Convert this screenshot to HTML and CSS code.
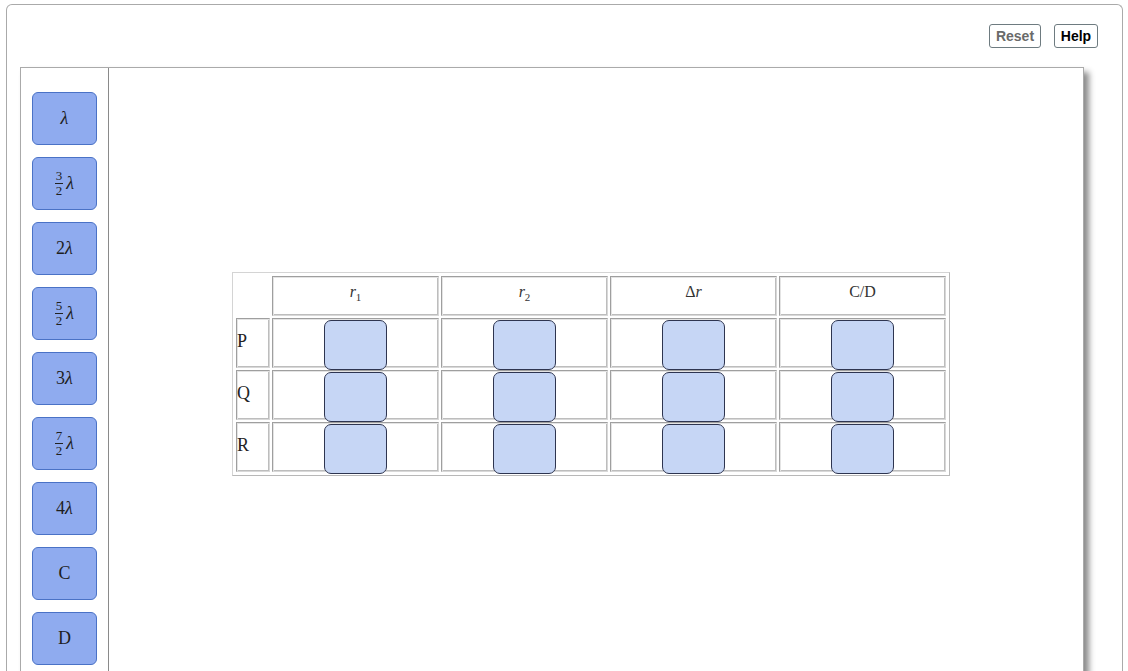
FILE: index.html
```html
<!DOCTYPE html>
<html>
<head>
<meta charset="utf-8">
<link rel="stylesheet" href="styles.css">
</head>
<body>
<div class="frame">
  <div class="toolbar">
    <button class="btn btn-reset">Reset</button>
    <button class="btn btn-help">Help</button>
  </div>
  <div class="workspace">
    <div class="palette">
      <div class="tile"><span class="mi">λ</span></div>
      <div class="tile"><span class="frac"><span class="num">3</span><span class="den">2</span></span><span class="mi">λ</span></div>
      <div class="tile"><span class="mn">2</span><span class="mi">λ</span></div>
      <div class="tile"><span class="frac"><span class="num">5</span><span class="den">2</span></span><span class="mi">λ</span></div>
      <div class="tile"><span class="mn">3</span><span class="mi">λ</span></div>
      <div class="tile"><span class="frac"><span class="num">7</span><span class="den">2</span></span><span class="mi">λ</span></div>
      <div class="tile"><span class="mn">4</span><span class="mi">λ</span></div>
      <div class="tile"><span class="mn">C</span></div>
      <div class="tile"><span class="mn">D</span></div>
    </div>
    <div class="canvas">
      <table class="grid">
        <tr class="head">
          <td class="corner"></td>
          <td class="hcell"><span class="mi">r</span><sub>1</sub></td>
          <td class="hcell"><span class="mi">r</span><sub>2</sub></td>
          <td class="hcell">Δ<span class="mi">r</span></td>
          <td class="hcell">C/D</td>
        </tr>
        <tr class="row">
          <td class="label">P</td>
          <td class="cell"><div class="target"></div></td>
          <td class="cell"><div class="target"></div></td>
          <td class="cell"><div class="target"></div></td>
          <td class="cell"><div class="target"></div></td>
        </tr>
        <tr class="row">
          <td class="label">Q</td>
          <td class="cell"><div class="target"></div></td>
          <td class="cell"><div class="target"></div></td>
          <td class="cell"><div class="target"></div></td>
          <td class="cell"><div class="target"></div></td>
        </tr>
        <tr class="row">
          <td class="label">R</td>
          <td class="cell"><div class="target"></div></td>
          <td class="cell"><div class="target"></div></td>
          <td class="cell"><div class="target"></div></td>
          <td class="cell"><div class="target"></div></td>
        </tr>
      </table>
    </div>
  </div>
</div>
</body>
</html>
```
FILE: styles.css
```css
html, body {
  margin: 0;
  padding: 0;
  background: #fff;
  height: 100%;
  overflow: hidden;
}
body {
  font-family: "Liberation Sans", Arial, sans-serif;
}
.frame {
  margin: 4px 5px 0 6px;
  border: 1px solid #aaa;
  border-bottom: none;
  border-radius: 6px 6px 0 0;
  height: calc(100% - 4px);
  padding: 0 24px 0 13px;
  box-sizing: border-box;
  display: flex;
  flex-direction: column;
  overflow: hidden;
}
.toolbar {
  display: flex;
  justify-content: flex-end;
  gap: 13px;
  padding-top: 19px;
  height: 62px;
  flex: none;
  box-sizing: border-box;
}
.btn {
  font-family: "Liberation Sans", Arial, sans-serif;
  font-weight: bold;
  font-size: 14px;
  height: 24px;
  padding: 0 5px;
  background: #fff;
  border: 1px solid #6e7b80;
  border-radius: 3px;
  line-height: 20px;
}
.btn-reset { color: #6a6a6a; width: 52px; }
.btn-help { color: #000; width: 44px; }
.workspace {
  display: flex;
  flex: 1;
  margin-right: 14px;
  margin-bottom: -20px;
  border: 1px solid #aaa;
  border-bottom: none;
  box-shadow: 5px 5px 6px #8c8c8c;
  background: #fff;
}
.palette {
  width: 87px;
  border-right: 1px solid #8a8a8a;
  display: flex;
  flex-direction: column;
  align-items: center;
  gap: 12px;
  padding-top: 24px;
  box-sizing: content-box;
}
.tile {
  width: 65px;
  height: 53px;
  flex: none;
  box-sizing: border-box;
  background: #8fabef;
  border: 1px solid #4a72c6;
  border-radius: 6px;
  display: flex;
  align-items: center;
  justify-content: center;
  font-family: "Liberation Serif", serif;
  font-size: 18px;
  color: #1e1e1e;
}
.mi {
  font-family: "Liberation Serif", serif;
  font-style: italic;
}
.mn {
  font-family: "Liberation Serif", serif;
}
.frac {
  display: inline-flex;
  flex-direction: column;
  align-items: center;
  font-size: 13px;
  line-height: 12px;
  margin-right: 3px;
}
.frac .num {
  border-bottom: 1px solid #222;
  padding: 0 1px 1px;
}
.frac .den {
  padding-top: 1px;
}
.canvas {
  flex: 1;
  padding-top: 204px;
  padding-left: 123px;
}
.grid {
  border-collapse: separate;
  border-spacing: 2px;
  border: 1px solid #d4d4d4;
  border-right-color: #b8b8b8;
  border-bottom-color: #b8b8b8;
  padding: 1px;
}
.grid td {
  padding: 0;
  box-sizing: border-box;
}
.corner {
  width: 34px;
}
.hcell, .cell, .label {
  border: 1px solid #9f9f9f;
  border-right-color: #d8d8d8;
  border-bottom-color: #d8d8d8;
  box-shadow: inset 1px 1px 0 #e4e4e4, inset -1px -1px 0 #bdbdbd;
}
.grid .hcell {
  width: 167px;
  height: 40px;
  text-align: center;
  font-family: "Liberation Serif", serif;
  font-size: 16px;
  line-height: 18px;
  color: #333;
  vertical-align: top;
  padding-top: 6px;
}
.hcell sub {
  font-style: normal;
  font-size: 11px;
  line-height: 0;
}
.row td {
  height: 50px;
}
.grid .label {
  width: 34px;
  font-family: "Liberation Serif", serif;
  font-size: 18px;
  color: #222;
  vertical-align: middle;
  padding: 0 0 4px 0;
}
.grid .cell {
  vertical-align: top;
  padding: 0;
}
.target {
  width: 63px;
  height: 50px;
  box-sizing: border-box;
  margin: 1px auto -3px;
  background: #c6d6f5;
  border: 1px solid #2e3550;
  border-radius: 7px;
}
```
